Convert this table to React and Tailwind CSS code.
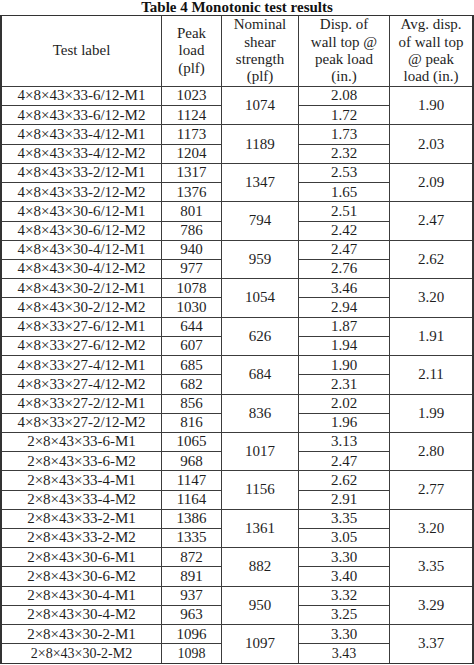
import React from "react";

const groups = [
  ["4×8×43×33-6/12", "1023", "1124", "1074", "2.08", "1.72", "1.90"],
  ["4×8×43×33-4/12", "1173", "1204", "1189", "1.73", "2.32", "2.03"],
  ["4×8×43×33-2/12", "1317", "1376", "1347", "2.53", "1.65", "2.09"],
  ["4×8×43×30-6/12", "801", "786", "794", "2.51", "2.42", "2.47"],
  ["4×8×43×30-4/12", "940", "977", "959", "2.47", "2.76", "2.62"],
  ["4×8×43×30-2/12", "1078", "1030", "1054", "3.46", "2.94", "3.20"],
  ["4×8×33×27-6/12", "644", "607", "626", "1.87", "1.94", "1.91"],
  ["4×8×33×27-4/12", "685", "682", "684", "1.90", "2.31", "2.11"],
  ["4×8×33×27-2/12", "856", "816", "836", "2.02", "1.96", "1.99"],
  ["2×8×43×33-6", "1065", "968", "1017", "3.13", "2.47", "2.80"],
  ["2×8×43×33-4", "1147", "1164", "1156", "2.62", "2.91", "2.77"],
  ["2×8×43×33-2", "1386", "1335", "1361", "3.35", "3.05", "3.20"],
  ["2×8×43×30-6", "872", "891", "882", "3.30", "3.40", "3.35"],
  ["2×8×43×30-4", "937", "963", "950", "3.32", "3.25", "3.29"],
  ["2×8×43×30-2", "1096", "1098", "1097", "3.30", "3.43", "3.37"],
];

const cell = "bg-white flex items-center justify-center";

function Cell({ children, className = "" }) {
  return <div className={`${cell} ${className}`}>{children}</div>;
}

export default function App() {
  return (
    <div className="h-[665px] w-[474px] bg-white text-[#1e1e1e] font-['Liberation_Serif','Times_New_Roman',serif] text-[15px] leading-[17.3px]">
      {/* Title */}
      <div className="h-[15px] text-center font-bold leading-[14px] text-[#111]">
        Table 4 Monotonic test results
      </div>

      {/* Table */}
      <div className="grid grid-cols-[159px_59px_76px_90px_82px] grid-rows-[70px_repeat(30,18.23px)] gap-px bg-[#3c3c3c] border-t border-b border-l-2 border-r-2 border-[#333]">
        <Cell>Test label</Cell>
        <Cell className="text-center">
          Peak
          <br />
          load
          <br />
          (plf)
        </Cell>
        <Cell className="text-center">
          Nominal
          <br />
          shear
          <br />
          strength
          <br />
          (plf)
        </Cell>
        <Cell className="text-center">
          Disp. of
          <br />
          wall top @
          <br />
          peak load
          <br />
          (in.)
        </Cell>
        <Cell className="text-center">
          Avg. disp.
          <br />
          of wall top
          <br />
          @ peak
          <br />
          load (in.)
        </Cell>

        {groups.map((g, i) => {
          const last = i === groups.length - 1;
          return (
            <React.Fragment key={g[0]}>
              <Cell>{g[0]}-M1</Cell>
              <Cell>{g[1]}</Cell>
              <Cell className="row-span-2">{g[3]}</Cell>
              <Cell>{g[4]}</Cell>
              <Cell className="row-span-2">{g[6]}</Cell>
              <Cell className={last ? "text-[14px]" : ""}>{g[0]}-M2</Cell>
              <Cell className={last ? "text-[14px]" : ""}>{g[2]}</Cell>
              <Cell className={last ? "text-[14px]" : ""}>{g[5]}</Cell>
            </React.Fragment>
          );
        })}
      </div>
    </div>
  );
}
